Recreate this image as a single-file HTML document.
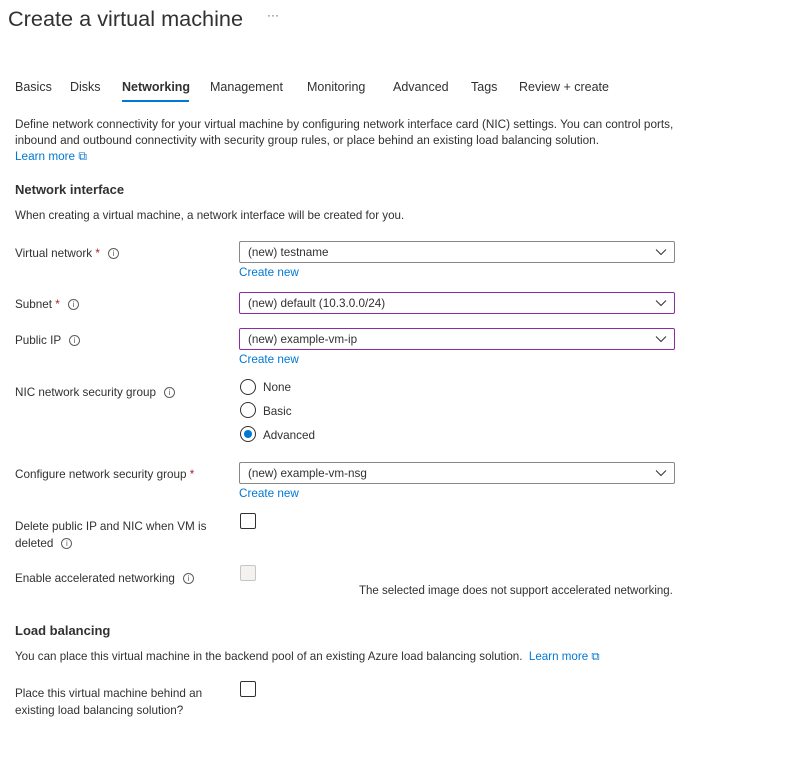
<!DOCTYPE html>
<html><head><meta charset="utf-8"><style>
body{margin:0;width:792px;height:783px;background:#fff;font-family:"Segoe UI","Liberation Sans",sans-serif;color:#323130;font-size:11.7px;position:relative;overflow:hidden}
.a{position:absolute;white-space:nowrap;margin-top:1px}
.t{position:absolute;top:80px;font-size:12.5px;color:#323130}
.lnk{color:#0078d4}
.dd{position:absolute;left:239px;width:434px;height:20px;border:1px solid #8a8886;border-radius:2px}
.dd span{position:absolute;left:8px;top:4px;font-size:11.7px}
.dd svg{position:absolute;right:7px;top:6px}
.p{border-color:#8a2da5}
.i{display:inline-block;width:9px;height:9px;border:1px solid #605e5c;border-radius:50%;font-size:8px;line-height:9px;text-align:center;color:#605e5c;vertical-align:1px;margin-left:8px;font-family:"Liberation Sans",sans-serif}
.r{color:#a4262c}
.rad{position:absolute;left:240px;width:14px;height:14px;border:1px solid #323130;border-radius:50%}
.cb{position:absolute;left:240px;width:14px;height:14px;border:1px solid #323130;border-radius:2px}
h3{margin:0;position:absolute;font-size:13px;font-weight:bold;color:#323130}
</style></head><body>
<div class="a" style="left:8px;top:5px;font-size:21.7px;color:#323130">Create a virtual machine</div>
<div class="a" style="left:267px;top:7px;font-size:12px;color:#605e5c">···</div>
<div class="t" style="left:15px">Basics</div>
<div class="t" style="left:70px">Disks</div>
<div class="t" style="left:122px;font-weight:bold">Networking</div>
<div class="a" style="left:122px;top:100px;width:67px;height:2px;background:#0078d4;margin:0"></div>
<div class="t" style="left:210px">Management</div>
<div class="t" style="left:307px">Monitoring</div>
<div class="t" style="left:393px">Advanced</div>
<div class="t" style="left:471px">Tags</div>
<div class="t" style="left:519px">Review + create</div>
<div class="a" style="left:15px;top:116px;line-height:16px;font-size:11.75px">Define network connectivity for your virtual machine by configuring network interface card (NIC) settings. You can control ports,<br>inbound and outbound connectivity with security group rules, or place behind an existing load balancing solution.<br><span class="lnk">Learn more ⧉</span></div>
<h3 style="left:15px;top:182px">Network interface</h3>
<div class="a" style="left:15px;top:208px;font-size:11.6px">When creating a virtual machine, a network interface will be created for you.</div>
<div class="a" style="left:15px;top:246px">Virtual network <span class="r">*</span><span class="i">i</span></div>
<div class="dd" style="top:241px"><span>(new) testname</span><svg width="12" height="8"><path d="M1 1.5l5 5 5-5" fill="none" stroke="#323130"/></svg></div>
<div class="a lnk" style="left:239px;top:265px">Create new</div>
<div class="a" style="left:15px;top:297px">Subnet <span class="r">*</span><span class="i">i</span></div>
<div class="dd p" style="top:292px"><span>(new) default (10.3.0.0/24)</span><svg width="12" height="8"><path d="M1 1.5l5 5 5-5" fill="none" stroke="#323130"/></svg></div>
<div class="a" style="left:15px;top:333px">Public IP<span class="i">i</span></div>
<div class="dd p" style="top:328px"><span>(new) example-vm-ip</span><svg width="12" height="8"><path d="M1 1.5l5 5 5-5" fill="none" stroke="#323130"/></svg></div>
<div class="a lnk" style="left:239px;top:352px">Create new</div>
<div class="a" style="left:15px;top:385px">NIC network security group<span class="i">i</span></div>
<div class="rad" style="top:379px"></div><div class="a" style="left:263px;top:380px">None</div>
<div class="rad" style="top:402px"></div><div class="a" style="left:263px;top:404px">Basic</div>
<div class="rad" style="top:426px"><div style="position:absolute;left:3px;top:3px;width:8px;height:8px;border-radius:50%;background:#0078d4"></div></div><div class="a" style="left:263px;top:428px">Advanced</div>
<div class="a" style="left:15px;top:467px">Configure network security group <span class="r">*</span></div>
<div class="dd" style="top:462px"><span>(new) example-vm-nsg</span><svg width="12" height="8"><path d="M1 1.5l5 5 5-5" fill="none" stroke="#323130"/></svg></div>
<div class="a lnk" style="left:239px;top:486px">Create new</div>
<div class="a" style="left:15px;top:517px;line-height:17px">Delete public IP and NIC when VM is<br>deleted<span class="i">i</span></div>
<div class="cb" style="top:513px"></div>
<div class="a" style="left:15px;top:571px">Enable accelerated networking<span class="i">i</span></div>
<div class="cb" style="top:565px;background:#f3f2f1;border-color:#c8c6c4"></div>
<div class="a" style="left:359px;top:584px;font-size:11.5px">The selected image does not support accelerated networking.</div>
<h3 style="left:15px;top:623px">Load balancing</h3>
<div class="a" style="left:15px;top:649px;font-size:11.6px">You can place this virtual machine in the backend pool of an existing Azure load balancing solution. &nbsp;<span class="lnk">Learn more ⧉</span></div>
<div class="a" style="left:15px;top:684px;line-height:17px">Place this virtual machine behind an<br>existing load balancing solution?</div>
<div class="cb" style="top:681px"></div>
</body></html>
